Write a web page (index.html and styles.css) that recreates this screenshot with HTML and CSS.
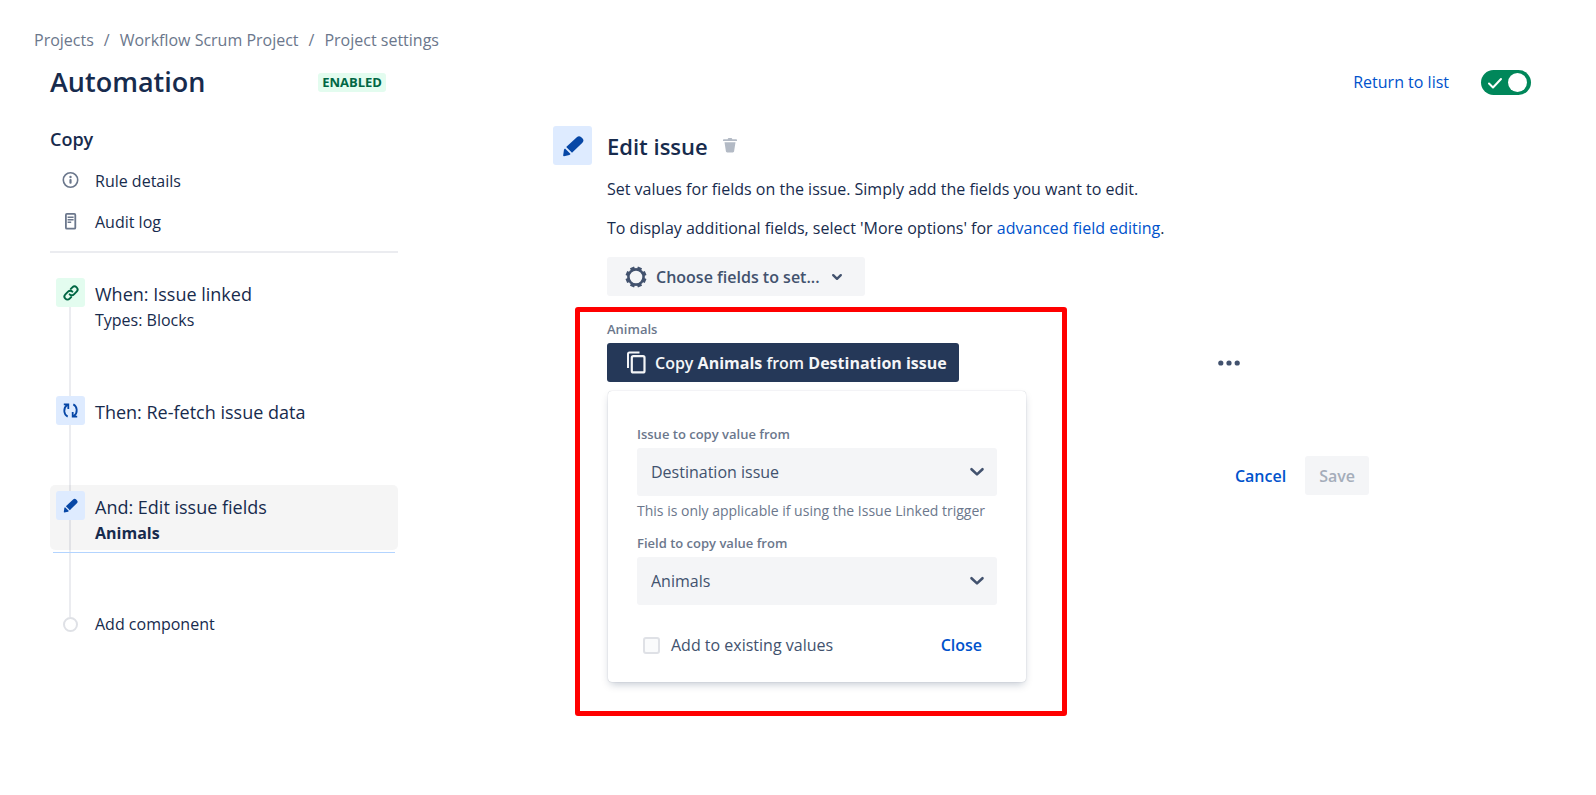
FILE: index.html
```html
<!DOCTYPE html>
<html lang="en">
<head>
    <meta charset="UTF-8">
    <meta name="viewport" content="width=device-width, initial-scale=1.0">
    <title>Automation - Project settings</title>
    <link rel="stylesheet" href="styles.css">
</head>
<body>
    <nav class="breadcrumbs" aria-label="Breadcrumbs">
        <a href="#">Projects</a>
        <span>/</span>
        <a href="#">Workflow Scrum Project</a>
        <span>/</span>
        <a href="#">Project settings</a>
    </nav>

    <header class="page-header">
        <div class="page-title">
            <h1>Automation</h1>
            <span class="badge">ENABLED</span>
        </div>
        <div class="page-actions">
            <a href="#">Return to list</a>
            <label class="toggle">
                <input type="checkbox" aria-label="Rule enabled" checked>
                <svg width="16" height="14" viewBox="0 0 16 14" fill="none" stroke="#fff" stroke-width="2" stroke-linecap="round" stroke-linejoin="round"><path d="M2 7.5l4 4L14 3"/></svg>
            </label>
        </div>
    </header>

    <div class="layout">
        <aside class="sidebar">
            <h2>Copy</h2>
            <ul class="rule-links">
                <li><a href="#">
                    <svg width="17" height="18" viewBox="0 0 17 18"><circle cx="8.5" cy="8" r="7.2" fill="none" stroke="#6b778c" stroke-width="1.6"/><circle cx="8.5" cy="5" r="1.2" fill="#6b778c"/><rect x="7.4" y="7" width="2.2" height="4.8" rx="1" fill="#6b778c"/></svg>
                    Rule details
                </a></li>
                <li><a href="#">
                    <svg width="17" height="18" viewBox="0 0 17 18" fill="none" stroke="#6b778c"><rect x="3.9" y="0.9" width="9.4" height="14.8" rx="1" stroke-width="1.8"/><path d="M5.6 4.2h6M5.6 6.7h6M5.6 9.2h3.6" stroke-width="1.4"/></svg>
                    Audit log
                </a></li>
            </ul>

            <ol class="steps">
                <li class="step">
                    <span class="step-icon trigger">
                        <svg width="18" height="18" viewBox="0 0 24 24" fill="none" stroke="#006644" stroke-width="2.6" stroke-linecap="round"><path d="M10.2 13.8a4 4 0 0 0 5.7 0l3.6-3.6a4 4 0 0 0-5.7-5.7l-2 2"/><path d="M13.8 10.2a4 4 0 0 0-5.7 0l-3.6 3.6a4 4 0 0 0 5.7 5.7l2-2"/></svg>
                    </span>
                    <div class="step-text">
                        <a href="#">When: Issue linked</a>
                        <p>Types: Blocks</p>
                    </div>
                </li>
                <li class="step">
                    <span class="step-icon">
                        <svg width="17" height="17" viewBox="0 0 17 17" fill="none" stroke="#0747a6" stroke-width="1.8"><path d="M5.7 14.6C1.6 12.6 1 6.2 5 3M1.8 2.3h4.5V7"/><path d="M11.3 2.4c4.1 2 4.7 8.4.7 11.6m3.2.7h-4.5V10"/></svg>
                    </span>
                    <div class="step-text">
                        <a href="#">Then: Re-fetch issue data</a>
                    </div>
                </li>
                <li class="step selected">
                    <span class="step-icon">
                        <svg width="15" height="15" viewBox="0 0 22 22" fill="#0747a6"><path d="M4.2 12 14.8 2.2Q17 .2 19 2l1.600 1.600q1.800 2-.2 4.200L10 17.800zM3 13.400 8.600 19l-1.200 1-5.400 1.200q-1 0-.8-1l.8-5.800z"/></svg>
                    </span>
                    <div class="step-text">
                        <a href="#">And: Edit issue fields</a>
                        <p><strong>Animals</strong></p>
                    </div>
                </li>
                <li class="step add">
                    <span class="step-dot"></span>
                    <a href="#">Add component</a>
                </li>
            </ol>
        </aside>

        <main class="component">
            <div class="component-header">
                <span class="component-icon">
                    <svg width="22" height="22" viewBox="0 0 22 22" fill="#0747a6"><path d="M4.2 12 14.8 2.2Q17 .2 19 2l1.600 1.600q1.800 2-.2 4.200L10 17.800zM3 13.400 8.600 19l-1.200 1-5.400 1.200q-1 0-.8-1l.8-5.800z"/></svg>
                </span>
                <h2>Edit issue</h2>
                <button class="icon-button" aria-label="Delete">
                    <svg width="14" height="15" viewBox="0 0 14 15" fill="#b3bac5"><path d="M0 2.2c0-.7.4-1 1-1h3.7C5 .4 5.4.1 6 .1h2c.6 0 1 .3 1.3 1.1H13c.6 0 1 .3 1 1v.9H0zM1.5 4.3h11l-1.4 9c-.1.7-.6 1.2-1.3 1.2H4.2c-.7 0-1.2-.5-1.3-1.2z"/></svg>
                </button>
            </div>

            <div class="component-body">
                <p>Set values for fields on the issue. Simply add the fields you want to edit.</p>
                <p>To display additional fields, select 'More options' for <a href="#">advanced field editing</a>.</p>

                <button class="choose-button">
                    <svg width="22" height="22" viewBox="0 0 22 22" fill="none" stroke="#42526e"><circle cx="11" cy="11" r="7.6" stroke-width="2.6"/><path stroke-width="4.4" d="M11 .6V3M11 19v2.4M.6 11H3M19 11h2.4M3.6 3.600l1.800 1.800M16.600 16.600l1.800 1.800M3.600 18.400l1.800-1.800M16.600 5.400l1.800-1.800" transform="rotate(22.5 11 11)"/></svg>
                    <span>Choose fields to set...</span>
                    <svg class="small-chevron" width="12" height="8" viewBox="0 0 12 8" fill="none" stroke="#42526e" stroke-width="2.4" stroke-linecap="round" stroke-linejoin="round"><path d="M2.2 2.2 6 5.8l3.8-3.6"/></svg>
                </button>

                <div class="field">
                    <div class="field-label">Animals</div>
                    <div class="field-row">
                        <button class="copy-button">
                            <svg width="20" height="23" viewBox="0 0 20 23" fill="none" stroke="#f4f5f7" stroke-width="2"><rect x="5.8" y="5.2" width="12.7" height="16.2" rx="1.5" stroke-width="2.2"/><path d="M2 17V3c0-.9.6-1.500 1.500-1.500h10"/></svg>
                            <span>Copy <b>Animals</b> from <b>Destination issue</b></span>
                        </button>
                        <button class="icon-button more" aria-label="More">
                            <svg width="22" height="6" viewBox="0 0 22 6" fill="#42526e"><circle cx="2.8" cy="3" r="2.6"/><circle cx="11" cy="3" r="2.6"/><circle cx="19.2" cy="3" r="2.6"/></svg>
                        </button>
                    </div>

                    <div class="popup">
                        <label class="field-label" for="issue">Issue to copy value from</label>
                        <div class="select">
                            <select id="issue">
                                <option>Destination issue</option>
                            </select>
                            <svg width="16" height="10" viewBox="0 0 16 10" fill="none" stroke="#42526e" stroke-width="2.6" stroke-linecap="round" stroke-linejoin="round"><path d="M2.5 2.2 8 7.4l5.5-5.2"/></svg>
                        </div>
                        <p class="hint">This is only applicable if using the Issue Linked trigger</p>
                        <label class="field-label" for="source">Field to copy value from</label>
                        <div class="select">
                            <select id="source">
                                <option>Animals</option>
                            </select>
                            <svg width="16" height="10" viewBox="0 0 16 10" fill="none" stroke="#42526e" stroke-width="2.6" stroke-linecap="round" stroke-linejoin="round"><path d="M2.5 2.2 8 7.4l5.5-5.2"/></svg>
                        </div>
                        <div class="popup-footer">
                            <input type="checkbox" id="add-existing">
                            <label for="add-existing">Add to existing values</label>
                            <button class="link-button">Close</button>
                        </div>
                    </div>
                    <div class="highlight"></div>
                </div>

                <div class="form-actions">
                    <button class="link-button">Cancel</button>
                    <button class="save-button" disabled>Save</button>
                </div>
            </div>
        </main>
    </div>
</body>
</html>
```
FILE: styles.css
```css
*,
*::before,
*::after {
    box-sizing: border-box;
}
body {
    min-height: 100vh;
    margin: 0;
    padding: 28px 50px 0;
    font-family: "Open Sans", sans-serif;
    font-size: 16px;
    line-height: 24px;
    color: #172b4d;
    background-color: #fff;
}
h1, h2, p, ul, ol {
    margin: 0;
    padding: 0;
    font-weight: normal;
}
ul, ol {
    list-style: none;
}
svg {
    display: block;
    flex-shrink: 0;
}
a {
    color: #0052cc;
    text-decoration: none;
}
a:hover {
    text-decoration: underline;
}
button {
    padding: 0;
    border: none;
    border-radius: 3px;
    background: none;
    font: inherit;
    cursor: pointer;
}

/* header */
.breadcrumbs {
    display: flex;
    gap: 10px;
    margin-left: -16px;
}
.breadcrumbs,
.breadcrumbs a {
    color: #6b778c;
}
.page-header,
.page-title,
.page-actions {
    display: flex;
    align-items: center;
    justify-content: space-between;
}
.page-header {
    margin-top: 10px;
    padding-right: 15px;
}
.page-title {
    width: 348px;
    padding-right: 12px;
}
.page-title h1 {
    font-size: 27px;
    line-height: 40px;
    font-weight: 600;
}
.badge {
    padding: 0 4px;
    border-radius: 3px;
    background-color: #e3fcef;
    color: #006644;
    font-size: 13px;
    line-height: 19px;
    font-weight: 700;
}
.page-actions {
    gap: 32px;
    font-weight: 500;
}
.toggle {
    display: flex;
    position: relative;
    cursor: pointer;
}
.toggle input {
    appearance: none;
    display: flex;
    align-items: center;
    justify-content: flex-end;
    width: 50px;
    height: 25px;
    margin: 0;
    padding: 3px;
    border-radius: 13px;
    background-color: #00875a;
}
.toggle input::before {
    content: "";
    width: 19px;
    height: 19px;
    margin-right: 1px;
    border-radius: 50%;
    background-color: #fff;
}
.toggle svg {
    position: absolute;
    left: 6px;
    top: 6px;
}

/* sidebar */
.layout {
    display: flex;
    gap: 155px;
    padding-top: 24px;
}
.sidebar {
    width: 348px;
    flex-shrink: 0;
}
.sidebar h2 {
    padding-top: 1px;
    font-size: 18px;
    font-weight: 600;
}
.sidebar a {
    color: #172b4d;
}
.rule-links {
    padding: 9px 0;
    border-bottom: 2px solid #ebecf0;
}
.rule-links a {
    display: flex;
    align-items: center;
    gap: 16px;
    height: 41px;
    padding-left: 12px;
}
.steps {
    display: flex;
    flex-direction: column;
    gap: 53px;
    position: relative;
    padding-top: 19px;
}
.steps::before {
    content: "";
    position: absolute;
    left: 19px;
    top: 30px;
    bottom: 28px;
    width: 2px;
    background-color: #ebecf0;
}
.step {
    display: flex;
    gap: 10px;
    min-height: 42px;
    padding: 6px 6px 5px;
    border-radius: 5px;
}
.step-icon {
    display: flex;
    align-items: center;
    justify-content: center;
    position: relative;
    width: 29px;
    height: 29px;
    border-radius: 3px;
    background-color: #deebff;
}
.step-icon.trigger {
    background-color: #e3fcef;
}
.step-text {
    padding-top: 2px;
}
.step-text a {
    display: block;
    font-size: 18px;
    line-height: 28px;
}
.step.selected {
    position: relative;
    background-color: rgba(0, 0, 0, 0.04);
}
.step.selected::after {
    content: "";
    position: absolute;
    left: 3px;
    right: 3px;
    bottom: -3px;
    height: 1px;
    background-color: #b3d4ff;
}
.step.add {
    align-items: center;
    gap: 17px;
    padding: 0 13px;
}
.step-dot {
    position: relative;
    width: 15px;
    height: 15px;
    border: 2px solid #dfe1e6;
    border-radius: 50%;
    background-color: #fff;
}

/* component form */
.component {
    flex: 1;
    max-width: 816px;
}
.component-header {
    display: flex;
    align-items: center;
    gap: 15px;
}
.component-header h2 {
    font-size: 22px;
    line-height: 32px;
    font-weight: 600;
}
.component-icon {
    display: flex;
    align-items: center;
    justify-content: center;
    width: 39px;
    height: 39px;
    border-radius: 3px;
    background-color: #deebff;
}
.component-body {
    padding-left: 54px;
}
.component-body > p {
    padding-top: 12px;
    margin-bottom: 3px;
}
.choose-button,
.copy-button {
    display: flex;
    align-items: center;
    gap: 9px;
    height: 39px;
    padding: 0 12px 0 19px;
    font-weight: 600;
}
.choose-button {
    margin-top: 17px;
    padding: 0 22px 0 18px;
    background-color: #f4f5f7;
    color: #42526e;
}
.small-chevron {
    margin-left: 2px;
}
.field {
    position: relative;
    margin-top: 23px;
}
.field-label {
    display: block;
    margin-bottom: 4px;
    color: #6b778c;
    font-size: 13px;
    line-height: 20px;
    font-weight: 600;
}
.field-row {
    display: flex;
    justify-content: space-between;
    padding-right: 129px;
}
.copy-button {
    background-color: #253858;
    color: #f4f5f7;
}
.copy-button b {
    font-weight: 700;
}
.popup {
    position: absolute;
    left: 1px;
    top: 72px;
    z-index: 1;
    width: 418px;
    padding: 33px 29px 25px;
    border-radius: 4px;
    background-color: #fff;
    box-shadow: 0 4px 8px -2px rgba(9, 30, 66, 0.25), 0 0 1px rgba(9, 30, 66, 0.31);
}
.select {
    display: flex;
    align-items: center;
    position: relative;
}
.select select {
    appearance: none;
    width: 100%;
    height: 48px;
    padding: 0 40px 0 14px;
    border: none;
    border-radius: 3px;
    background-color: #f4f5f7;
    color: #42526e;
    font: inherit;
}
.select svg {
    position: absolute;
    right: 12px;
    pointer-events: none;
}
.hint {
    margin: 5px 0 12px;
    color: #6b778c;
    font-size: 14px;
    line-height: 20px;
}
.popup-footer {
    display: flex;
    align-items: center;
    gap: 11px;
    padding: 28px 15px 0 6px;
    color: #42526e;
}
.popup-footer input {
    appearance: none;
    width: 17px;
    height: 17px;
    margin: 0;
    border: 2px solid #dfe1e6;
    border-radius: 3px;
    background-color: #fafbfc;
}
.popup-footer .link-button {
    margin-left: auto;
}
/* red box drawn round the field and its popup */
.highlight {
    position: absolute;
    left: -32px;
    top: -12px;
    width: 492px;
    height: 409px;
    border: 5px solid #f00;
    border-radius: 3px;
    pointer-events: none;
}
.form-actions {
    display: flex;
    justify-content: flex-end;
    gap: 19px;
    margin-top: 74px;
}
.link-button {
    color: #0052cc;
    font-weight: 600;
}
.save-button {
    height: 39px;
    padding: 0 14px;
    background-color: #f4f5f7;
    color: #a5adba;
    font-weight: 600;
}
```
